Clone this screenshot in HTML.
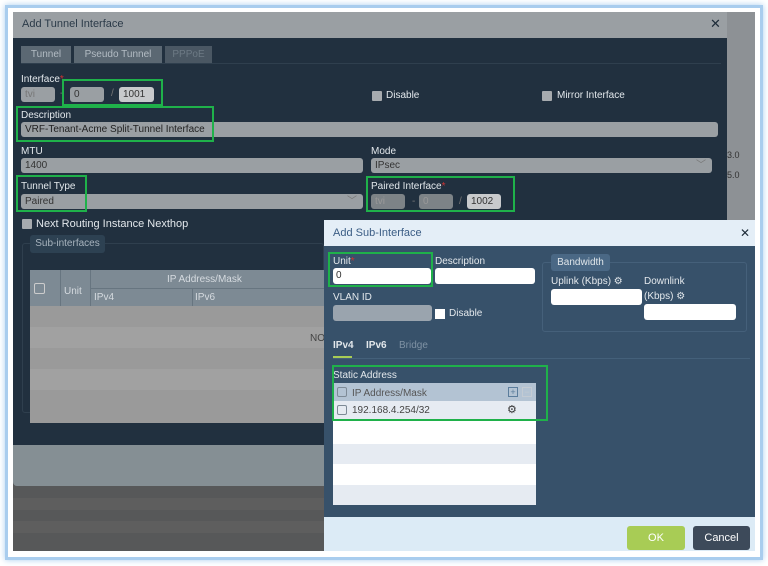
<!DOCTYPE html>
<html><head><meta charset="utf-8"><style>
*{box-sizing:border-box;margin:0;padding:0}
body{width:768px;height:566px;background:#fff;position:relative;overflow:hidden;font-family:"Liberation Sans","DejaVu Sans",sans-serif;font-size:10px;color:#dfe5ea}
.a{position:absolute}
.frame{left:5px;top:5px;width:758px;height:555px;border:3px solid #a9cdee;box-shadow:0 0 6px #a9cdee;background:#fff}
.inp{position:absolute;background:#9a9fa3;border-radius:3px;height:15px;color:#333;padding-left:4px;line-height:15px;font-size:10px}
.lbl{position:absolute;color:#e3e8ec;font-size:10px}
.gb{position:absolute;border:2px solid #1fb14a}
.cb{position:absolute;width:10px;height:10px;background:#a7abaf;border-radius:1px}
.w{position:absolute;background:#fff;border-radius:3px;height:16px;color:#333;padding-left:3px;line-height:16px}
</style></head><body>
<div class="a frame"></div>
<!-- backdrop -->
<div class="a" style="left:13px;top:12px;width:742px;height:539px;background:#575859"></div>
<div class="a" style="left:13px;top:498px;width:311px;height:12px;background:#5e5e5e"></div>
<div class="a" style="left:13px;top:521px;width:311px;height:12px;background:#5e5e5e"></div>
<div class="a" style="left:727px;top:12px;width:28px;height:210px;background:#8d9195"></div>
<div class="a" style="left:727px;top:150px;font-size:9px;color:#333">3.0</div>
<div class="a" style="left:727px;top:170px;font-size:9px;color:#333">5.0</div>
<!-- main modal -->
<div class="a" style="left:13px;top:12px;width:714px;height:26px;background:#9a9fa3;color:#2b3a48;font-size:11px;padding:6px 9px">Add Tunnel Interface</div>
<div class="a" style="left:710px;top:16px;color:#1d2b38;font-size:13px;font-weight:bold">✕</div>
<div class="a" style="left:13px;top:38px;width:714px;height:407px;background:#21303f"></div>
<div class="a" style="left:13px;top:445px;width:714px;height:41px;background:#858f94;border-radius:0 0 4px 4px"></div>
<div class="a" style="left:21px;top:46px;width:50px;height:17px;background:#5b6873;color:#b3bcc4;text-align:center;line-height:17px">Tunnel</div>
<div class="a" style="left:74px;top:46px;width:88px;height:17px;background:#5b6873;color:#b3bcc4;text-align:center;line-height:17px">Pseudo Tunnel</div>
<div class="a" style="left:165px;top:46px;width:47px;height:17px;background:#4a5763;color:#6d7a85;text-align:center;line-height:17px">PPPoE</div>
<div class="a" style="left:21px;top:63px;width:700px;height:1px;background:#2f3f4e"></div>
<div class="lbl" style="left:21px;top:74px">Interface<span style="color:#c33">*</span></div>
<div class="inp" style="left:21px;top:87px;width:34px;color:#777">tvi</div>
<div class="a" style="left:60px;top:88px;color:#777">-</div>
<div class="inp" style="left:70px;top:87px;width:34px">0</div>
<div class="a" style="left:111px;top:88px;color:#777">/</div>
<div class="inp" style="left:119px;top:87px;width:35px;background:#c8cacc">1001</div>
<div class="gb" style="left:62px;top:79px;width:101px;height:27px"></div>
<div class="cb" style="left:372px;top:91px"></div><div class="lbl" style="left:386px;top:90px">Disable</div>
<div class="cb" style="left:542px;top:91px"></div><div class="lbl" style="left:557px;top:90px">Mirror Interface</div>
<div class="lbl" style="left:21px;top:110px">Description</div>
<div class="inp" style="left:21px;top:122px;width:697px;color:#222">VRF-Tenant-Acme Split-Tunnel Interface</div>
<div class="gb" style="left:16px;top:106px;width:198px;height:36px"></div>
<div class="lbl" style="left:21px;top:146px">MTU</div>
<div class="inp" style="left:21px;top:158px;width:342px">1400</div>
<div class="lbl" style="left:371px;top:146px">Mode</div>
<div class="inp" style="left:371px;top:158px;width:341px">IPsec<span style="position:absolute;right:6px;color:#777">﹀</span></div>
<div class="lbl" style="left:21px;top:181px">Tunnel Type</div>
<div class="inp" style="left:21px;top:194px;width:342px">Paired<span style="position:absolute;right:6px;color:#777">﹀</span></div>
<div class="gb" style="left:16px;top:175px;width:71px;height:37px"></div>
<div class="lbl" style="left:371px;top:181px">Paired Interface<span style="color:#c33">*</span></div>
<div class="inp" style="left:371px;top:194px;width:34px;background:#7d8387;color:#999">tvi</div>
<div class="a" style="left:412px;top:196px;color:#777">-</div>
<div class="inp" style="left:419px;top:194px;width:34px;background:#7d8387;color:#999">0</div>
<div class="a" style="left:459px;top:196px;color:#777">/</div>
<div class="inp" style="left:467px;top:194px;width:34px;background:#c8cacc">1002</div>
<div class="gb" style="left:366px;top:176px;width:149px;height:36px"></div>
<div class="cb" style="left:22px;top:219px"></div><div class="lbl" style="left:36px;top:218px;font-size:11px">Next Routing Instance Nexthop</div>
<div class="a" style="left:22px;top:243px;width:302px;height:170px;border:1px solid #2f3f4e;border-radius:3px"></div>
<div class="a" style="left:30px;top:235px;width:75px;height:18px;background:#2d4152;border-radius:3px;color:#a8b4be;text-align:center;line-height:18px">Sub-interfaces</div>
<div class="a" style="left:30px;top:270px;width:294px;height:18px;background:#7d8a94"></div>
<div class="a" style="left:30px;top:288px;width:294px;height:18px;background:#7d8a94"></div>
<div class="a" style="left:30px;top:306px;width:294px;height:117px;background:#9a9a9a"></div>
<div class="a" style="left:30px;top:327px;width:294px;height:21px;background:#a1a1a1"></div>
<div class="a" style="left:30px;top:369px;width:294px;height:21px;background:#a1a1a1"></div>
<div class="a" style="left:90px;top:288px;width:234px;height:1px;background:#677580"></div>
<div class="a" style="left:90px;top:270px;width:1px;height:36px;background:#677580"></div>
<div class="a" style="left:60px;top:270px;width:1px;height:36px;background:#677580"></div>
<div class="a" style="left:192px;top:288px;width:1px;height:18px;background:#677580"></div>
<div class="a" style="left:34px;top:283px;width:11px;height:11px;border:1px solid #ccc;border-radius:2px"></div>
<div class="a" style="left:64px;top:286px;color:#d6dbe0">Unit</div>
<div class="a" style="left:167px;top:274px;color:#d6dbe0">IP Address/Mask</div>
<div class="a" style="left:94px;top:292px;color:#d6dbe0">IPv4</div>
<div class="a" style="left:195px;top:292px;color:#d6dbe0">IPv6</div>
<div class="a" style="left:310px;top:333px;color:#444">NO</div>
<!-- sub modal -->
<div class="a" style="left:324px;top:220px;width:431px;height:26px;background:#e4eef7;color:#3b5d85;font-size:11px;padding:7px 9px">Add Sub-Interface</div>
<div class="a" style="left:740px;top:226px;color:#1d2b38;font-size:12px;font-weight:bold">✕</div>
<div class="a" style="left:324px;top:246px;width:431px;height:271px;background:#37516a"></div>
<div class="a" style="left:324px;top:517px;width:431px;height:34px;background:#dcebf6"></div>
<div class="a" style="left:627px;top:526px;width:58px;height:24px;background:#a8cc55;border-radius:3px;color:#fff;text-align:center;line-height:24px;font-size:11px">OK</div>
<div class="a" style="left:693px;top:526px;width:57px;height:24px;background:#3d4a5a;border-radius:3px;color:#fff;text-align:center;line-height:24px;font-size:11px">Cancel</div>
<div class="lbl" style="left:333px;top:256px">Unit<span style="color:#c33">*</span></div>
<div class="w" style="left:333px;top:268px;width:98px">0</div>
<div class="gb" style="left:328px;top:252px;width:105px;height:35px"></div>
<div class="lbl" style="left:435px;top:256px">Description</div>
<div class="w" style="left:435px;top:268px;width:100px"></div>
<div class="lbl" style="left:333px;top:292px">VLAN ID</div>
<div class="a" style="left:333px;top:305px;width:99px;height:16px;background:#9aa4ae;border-radius:3px"></div>
<div class="a" style="left:435px;top:309px;width:10px;height:10px;background:#fff"></div>
<div class="lbl" style="left:449px;top:308px">Disable</div>
<div class="a" style="left:542px;top:262px;width:205px;height:70px;border:1px solid #45607a;border-radius:3px"></div>
<div class="a" style="left:551px;top:254px;width:59px;height:17px;background:#4a6885;border-radius:3px;color:#dfe5ea;text-align:center;line-height:17px">Bandwidth</div>
<div class="lbl" style="left:551px;top:276px">Uplink (Kbps) ⚙</div>
<div class="w" style="left:551px;top:289px;width:91px"></div>
<div class="lbl" style="left:644px;top:276px">Downlink</div>
<div class="lbl" style="left:644px;top:291px">(Kbps) ⚙</div>
<div class="w" style="left:644px;top:304px;width:92px"></div>
<div class="lbl" style="left:333px;top:340px;font-weight:bold">IPv4</div>
<div class="lbl" style="left:366px;top:340px;font-weight:bold">IPv6</div>
<div class="lbl" style="left:399px;top:340px;color:#7f92a4">Bridge</div>
<div class="a" style="left:333px;top:356px;width:19px;height:2px;background:#a8cc55"></div>
<div class="a" style="left:333px;top:358px;width:417px;height:1px;background:#44607a"></div>
<div class="lbl" style="left:333px;top:370px">Static Address</div>
<div class="a" style="left:333px;top:383px;width:203px;height:122px;background:#fff"></div>
<div class="a" style="left:333px;top:383px;width:203px;height:18px;background:#b3c3d3"></div>
<div class="a" style="left:333px;top:401px;width:203px;height:19px;background:#e6ebf2"></div>
<div class="a" style="left:333px;top:444px;width:203px;height:20px;background:#e6ebf2"></div>
<div class="a" style="left:333px;top:485px;width:203px;height:20px;background:#e6ebf2"></div>
<div class="a" style="left:337px;top:387px;width:10px;height:10px;border:1px solid #7d8a96;border-radius:2px"></div>
<div class="a" style="left:337px;top:405px;width:10px;height:10px;border:1px solid #7d8a96;border-radius:2px"></div>
<div class="a" style="left:352px;top:388px;color:#555">IP Address/Mask</div>
<div class="a" style="left:352px;top:405px;color:#444">192.168.4.254/32</div>
<div class="a" style="left:508px;top:387px;width:10px;height:10px;border:1px solid #5b7d9c;color:#5b7d9c;font-size:9px;line-height:8px;text-align:center">+</div>
<div class="a" style="left:522px;top:387px;width:10px;height:10px;border:1px solid #c3cbd3;color:#c3cbd3;font-size:9px;line-height:8px;text-align:center">−</div>
<div class="a" style="left:507px;top:403px;color:#333;font-size:11px">⚙</div>
<div class="gb" style="left:332px;top:365px;width:216px;height:56px"></div>
</body></html>
